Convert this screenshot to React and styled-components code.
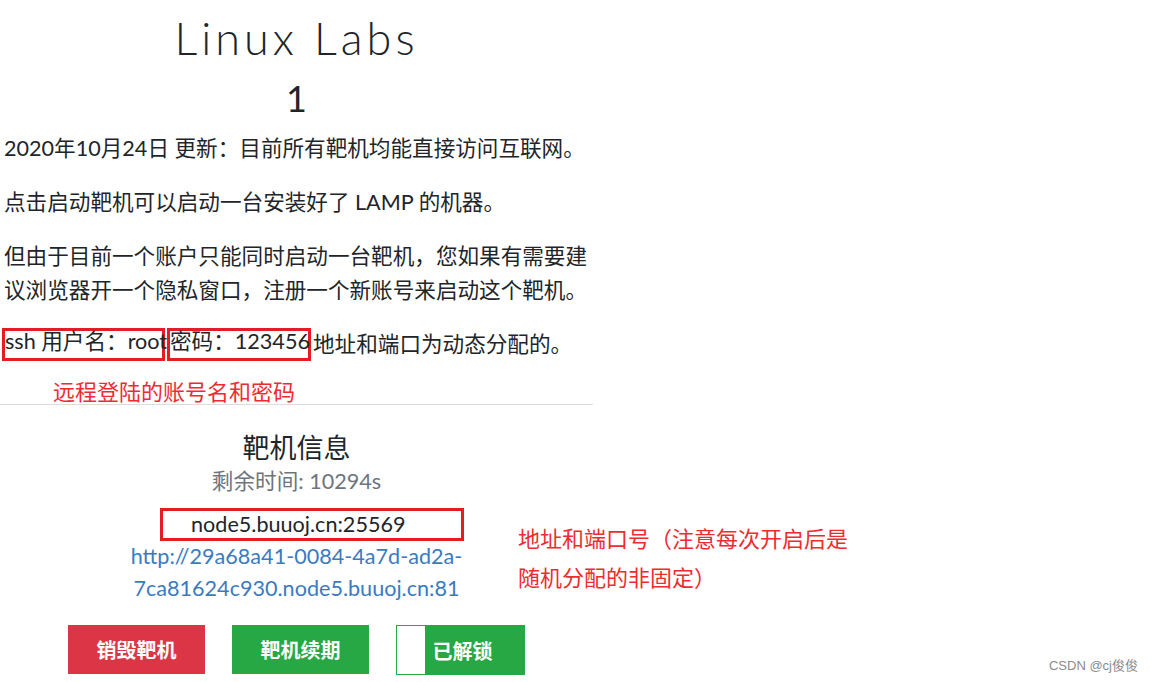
import React from "react";
import styled, { createGlobalStyle } from "styled-components";

const Global = createGlobalStyle`
  html, body { margin: 0; padding: 0; background: #fff; }
  body {
    font-family: Lato, "Noto Sans CJK SC", sans-serif;
    color: #212529;
    width: 1152px;
    height: 682px;
    overflow: hidden;
  }
`;

const Page = styled.div`
  position: relative;
  width: 1152px;
  height: 682px;
`;

const Column = styled.div`
  width: 593px;
  display: flex;
  flex-direction: column;
`;

const Title = styled.h1`
  margin: 12px 0 0;
  text-align: center;
  font-size: 45px;
  line-height: 52px;
  font-weight: 300;
  letter-spacing: 4px;
  color: #212529;
`;

const Level = styled.h2`
  margin: 12px 0 0;
  text-align: center;
  font-size: 36px;
  line-height: 44px;
  font-weight: 400;
`;

const Para = styled.p`
  margin: ${(p) => p.$top || 0}px 0 0;
  padding-left: 4px;
  font-size: 21.6px;
  line-height: 34px;
`;

const Mark = styled.span`
  display: inline-block;
  box-sizing: border-box;
  width: ${(p) => p.$w}px;
  border: 3px solid #e51c23;
  margin-left: ${(p) => p.$ml || 0}px;
  padding: 0 0 6px 0;
  line-height: 21px;
  white-space: nowrap;
  overflow: visible;
`;

const CredLine = styled.div`
  margin-top: ${(p) => p.$top || 0}px;
  display: flex;
  align-items: center;
  font-size: 21.6px;
  line-height: 34px;
  white-space: nowrap;
`;

const Tail = styled.span`
  margin-left: 2px;
`;

const Note = styled.div`
  color: #ef2b2f;
  font-size: 22px;
  line-height: 24px;
  margin: ${(p) => p.$top || 0}px 0 0 ${(p) => p.$left || 0}px;
  white-space: nowrap;
`;

const Rule = styled.hr`
  margin: 0;
  border: 0;
  border-top: 1px solid #dcdcdc;
  width: 593px;
`;

const Info = styled.div`
  display: flex;
  flex-direction: column;
  align-items: center;
`;

const InfoTitle = styled.div`
  margin-top: 25px;
  font-size: 27px;
  line-height: 36px;
`;

const Remain = styled.div`
  font-size: 21.6px;
  line-height: 30px;
  color: #6c757d;
`;

const HostBox = styled.div`
  align-self: flex-start;
  margin: 12px 0 0 160px;
  width: 270px;
  height: 27px;
  border: 3px solid #e51c23;
  padding-left: 28px;
  box-sizing: content-box;
  font-size: 21.6px;
  line-height: 27px;
  white-space: nowrap;
`;

const Link = styled.a`
  text-align: center;
  color: #3a7bbf;
  text-decoration: none;
  font-size: 21.6px;
  line-height: 32px;
  margin-top: -1px;
  width: 340px;
`;

const Buttons = styled.div`
  display: flex;
  justify-content: center;
  gap: 27px;
  margin-top: 21px;
`;

const Btn = styled.button`
  width: ${(p) => p.$w || 137}px;
  height: 49px;
  border: 0;
  padding: 0;
  background: ${(p) => p.$bg};
  color: #fff;
  font-family: Lato, "Noto Sans CJK SC", sans-serif;
  font-weight: 700;
  font-size: 20px;
  display: flex;
  align-items: center;
  justify-content: center;
`;

const Toggle = styled.div`
  width: 129px;
  height: 50px;
  box-sizing: border-box;
  border: 1px solid #28a745;
  background: #28a745;
  display: flex;
  color: #fff;
  font-weight: 700;
  font-size: 20px;
`;

const Knob = styled.div`
  width: 28px;
  background: #fff;
`;

const ToggleLabel = styled.div`
  flex: 1;
  display: flex;
  align-items: center;
  justify-content: center;
  padding-right: 24px;
`;

const SideNote = styled.div`
  position: absolute;
  left: 518px;
  top: 519px;
  color: #ef2b2f;
  font-size: 22px;
  line-height: 39px;
`;

const Watermark = styled.div`
  position: absolute;
  right: 14px;
  bottom: 8px;
  font-family: "Liberation Sans", "Noto Sans CJK SC", sans-serif;
  color: #8a8a8a;
  font-size: 13px;
`;

export default function App() {
  return (
    <Page>
      <Global />
      <Column>
        <Title>Linux Labs</Title>
        <Level>1</Level>
        <Para $top={11}>2020年10月24日 更新：目前所有靶机均能直接访问互联网。</Para>
        <Para $top={20}>点击启动靶机可以启动一台安装好了 LAMP 的机器。</Para>
        <Para $top={20}>
          但由于目前一个账户只能同时启动一台靶机，您如果有需要建议浏览器开一个隐私窗口，注册一个新账号来启动这个靶机。
        </Para>
        <CredLine $top={20}>
          <Mark $ml={2} $w={163}>ssh 用户名：root</Mark>
          <Mark $ml={2} $w={144}>密码：123456</Mark>
          <Tail>地址和端口为动态分配的。</Tail>
        </CredLine>
        <Note $top={19} $left={53}>远程登陆的账号名和密码</Note>
        <Rule />
        <Info>
          <InfoTitle>靶机信息</InfoTitle>
          <Remain>剩余时间: 10294s</Remain>
          <HostBox>node5.buuoj.cn:25569</HostBox>
          <Link href="#">http://29a68a41-0084-4a7d-ad2a-7ca81624c930.node5.buuoj.cn:81</Link>
        </Info>
        <Buttons>
          <Btn $bg="#dc3545">销毁靶机</Btn>
          <Btn $bg="#28a745">靶机续期</Btn>
          <Toggle>
            <Knob />
            <ToggleLabel>已解锁</ToggleLabel>
          </Toggle>
        </Buttons>
      </Column>
      <SideNote>
        地址和端口号（注意每次开启后是
        <br />
        随机分配的非固定）
      </SideNote>
      <Watermark>CSDN @cj俊俊</Watermark>
    </Page>
  );
}
